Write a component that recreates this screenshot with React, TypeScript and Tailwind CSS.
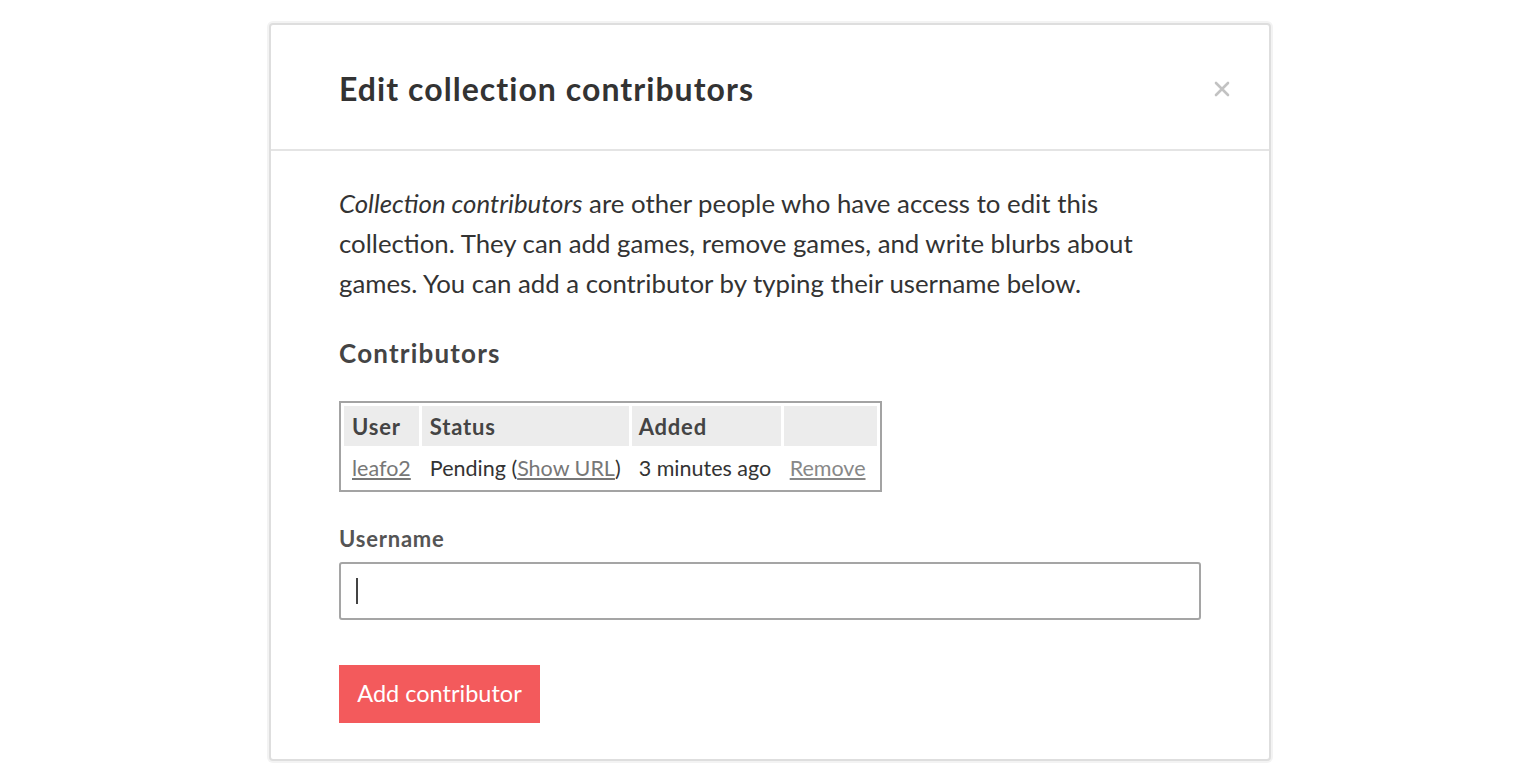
import React from 'react';

const contributors = [
  { user: 'leafo2', status: 'Pending', added: '3 minutes ago' },
];

const App: React.FC = () => {
  return (
    <div className="min-h-screen bg-white pt-[23px]" style={{ fontFamily: 'Lato, "Open Sans", sans-serif' }}>
      <div className="ml-[269px] w-[1002px] rounded-[4px] border-2 border-[#dedede] bg-white shadow-[0_0_0_2px_#f3f3f3]">
        {/* Header */}
        <div className="relative flex h-[126px] items-center border-b-2 border-[#e4e4e4] pl-[68px]">
          <h1 className="pt-[3px] text-[32px] font-bold tracking-[1.05px] text-[#333]">Edit collection contributors</h1>
          <button className="absolute right-[38px] top-[55px] text-[#c2c2c2]">
            <svg width="18" height="18" viewBox="0 0 18 18" stroke="currentColor" strokeWidth="2.6" strokeLinecap="round">
              <path d="M3 3 L15 15 M15 3 L3 15" />
            </svg>
          </button>
        </div>

        {/* Body */}
        <div className="pl-[68px] pr-[68px] pt-[32px] pb-[36px] text-[#333]">
          <p className="text-[25.8px] leading-[40px]">
            <em>Collection contributors</em> are other people who have access to edit this collection. They can add
            games, remove games, and write blurbs about games. You can add a contributor by typing their username
            below.
          </p>

          <h2 className="mt-[31px] text-[26px] font-bold tracking-[1.2px] text-[#444]">Contributors</h2>

          <table className="mt-[28px] border-separate border-spacing-[3px] border-2 border-[#a3a3a3] text-[21.5px]">
            <thead>
              <tr className="h-[40px] text-left tracking-[0.8px] text-[#444]">
                <th className="w-[74px] bg-[#ececec] px-[8px] text-[22px] font-bold">User</th>
                <th className="w-[206px] bg-[#ececec] px-[8px] text-[22px] font-bold">Status</th>
                <th className="w-[149px] bg-[#ececec] px-[7px] text-[22px] font-bold">Added</th>
                <th className="w-[93px] bg-[#ececec] px-[6px]"></th>
              </tr>
            </thead>
            <tbody>
              {contributors.map((c) => (
                <tr key={c.user} className="h-[38px] text-[#333]">
                  <td className="px-[8px]">
                    <a href="#" className="text-[#777] underline">{c.user}</a>
                  </td>
                  <td className="whitespace-nowrap px-[8px]">
                    {c.status} (<a href="#" className="text-[#777] underline">Show URL</a>)
                  </td>
                  <td className="whitespace-nowrap px-[7px]">{c.added}</td>
                  <td className="px-[6px]">
                    <a href="#" className="text-[#888] underline">Remove</a>
                  </td>
                </tr>
              ))}
            </tbody>
          </table>

          <label className="mt-[30px] block text-[22px] font-bold tracking-[0.8px] text-[#555]">Username</label>
          <div className="mt-[7px] flex h-[58px] w-[862px] items-center rounded-[3px] border-2 border-[#a5a5a5] pl-[15px]">
            <span className="h-[26px] w-[2px] bg-[#444]" />
          </div>

          <button className="mt-[45px] h-[58px] w-[201px] bg-[#f35a5c] text-[23.5px] text-white">Add contributor</button>
        </div>
      </div>
    </div>
  );
};

export default App;
